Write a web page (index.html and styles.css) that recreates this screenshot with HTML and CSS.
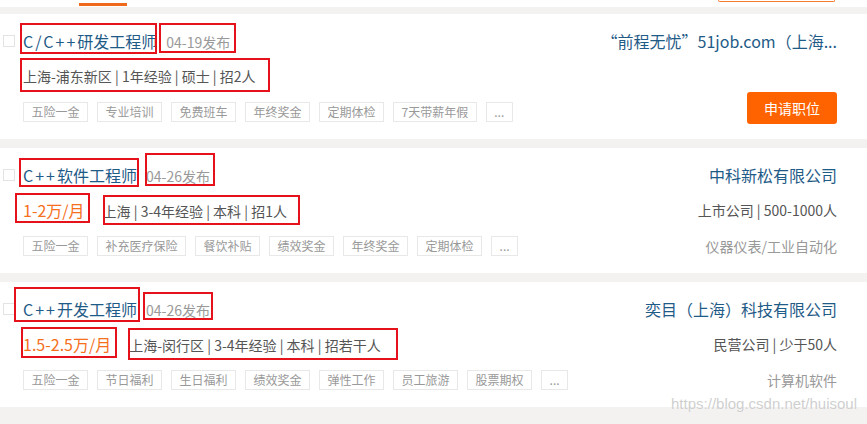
FILE: index.html
```html
<!DOCTYPE html>
<html lang="zh-CN">
<head>
<meta charset="utf-8">
<title>职位列表</title>
<link rel="stylesheet" href="styles.css">
</head>
<body>
<div class="topbar">
  <span class="tab-line"></span>
  <span class="top-btn"></span>
</div>

<div class="list">
  <div class="card">
    <span class="cb"></span>
    <div class="main">
      <div class="row1"><span class="title"><span class="lat">C/C++</span>研发工程师</span><span class="date">04-19发布</span></div>
      <div class="row2"><span class="info">上海-浦东新区 | 1年经验 | 硕士 | 招2人</span></div>
      <div class="tags">
        <span class="tag">五险一金</span><span class="tag">专业培训</span><span class="tag">免费班车</span><span class="tag">年终奖金</span><span class="tag">定期体检</span><span class="tag">7天带薪年假</span><span class="tag">...</span>
      </div>
    </div>
    <div class="side">
      <div class="company">“前程无忧”51job.com（上海...</div>
      <button class="apply">申请职位</button>
    </div>
    <i class="mark m1-title"></i><i class="mark m1-date"></i><i class="mark m1-info"></i>
  </div>

  <div class="card">
    <span class="cb"></span>
    <div class="main">
      <div class="row1"><span class="title"><span class="lat">C++</span>软件工程师</span><span class="date">04-26发布</span></div>
      <div class="row2"><span class="salary">1-2万/月</span><span class="info">上海 | 3-4年经验 | 本科 | 招1人</span></div>
      <div class="tags">
        <span class="tag">五险一金</span><span class="tag">补充医疗保险</span><span class="tag">餐饮补贴</span><span class="tag">绩效奖金</span><span class="tag">年终奖金</span><span class="tag">定期体检</span><span class="tag">...</span>
      </div>
    </div>
    <div class="side">
      <div class="company">中科新松有限公司</div>
      <div class="size">上市公司 | 500-1000人</div>
      <div class="industry">仪器仪表/工业自动化</div>
    </div>
    <i class="mark m2-title"></i><i class="mark m2-date"></i><i class="mark m2-salary"></i><i class="mark m2-info"></i>
  </div>

  <div class="card">
    <span class="cb"></span>
    <div class="main">
      <div class="row1"><span class="title"><span class="lat">C++</span>开发工程师</span><span class="date">04-26发布</span></div>
      <div class="row2"><span class="salary">1.5-2.5万/月</span><span class="info">上海-闵行区 | 3-4年经验 | 本科 | 招若干人</span></div>
      <div class="tags">
        <span class="tag">五险一金</span><span class="tag">节日福利</span><span class="tag">生日福利</span><span class="tag">绩效奖金</span><span class="tag">弹性工作</span><span class="tag">员工旅游</span><span class="tag">股票期权</span><span class="tag">...</span>
      </div>
    </div>
    <div class="side">
      <div class="company">奕目（上海）科技有限公司</div>
      <div class="size">民营公司 | 少于50人</div>
      <div class="industry">计算机软件</div>
    </div>
    <i class="mark m3-title"></i><i class="mark m3-date"></i><i class="mark m3-salary"></i><i class="mark m3-info"></i>
  </div>
</div>

<div class="watermark">https://blog.csdn.net/huisoul</div>
</body>
</html>
```

FILE: styles.css
```css
* { box-sizing: border-box; }

html, body {
  margin: 0;
  padding: 0;
}

body {
  width: 867px;
  height: 424px;
  overflow: hidden;
  background: #f3f2f1;
  font-family: "Noto Sans CJK SC", "Microsoft YaHei", sans-serif;
  color: #555;
  position: relative;
}

.topbar {
  height: 7px;
  background: #fff;
  display: flex;
  align-items: flex-start;
}

.tab-line {
  margin: 3px 0 0 79px;
  width: 48px;
  height: 3px;
  background: #f06a1d;
}

.top-btn {
  margin-left: auto;
  margin-right: 32px;
  width: 117px;
  height: 2px;
  border: 1px solid #f47c30;
  border-top: none;
  border-radius: 0 0 3px 3px;
}

.list {
  margin-top: 7px;
  display: flex;
  flex-direction: column;
  gap: 9px;
}

.card {
  position: relative;
  height: 125px;
  background: #fff;
  display: flex;
  padding: 16px 30px 0 0;
}

.cb {
  flex: none;
  width: 12px;
  height: 12px;
  margin: 5px 8px 0 3px;
  border: 1px solid #e3e3e3;
  background: #fff;
}

.main {
  flex: 1;
  min-width: 0;
}

.row1 {
  height: 22px;
  line-height: 22px;
  display: flex;
  align-items: baseline;
  white-space: nowrap;
}

.title {
  font-size: 16px;
  color: #1f5b87;
}

.lat {
  letter-spacing: 2px;
}

.date {
  margin-left: 9px;
  font-size: 14px;
  color: #999;
}

.row2 {
  margin-top: 13px;
  height: 22px;
  line-height: 22px;
  display: flex;
  align-items: baseline;
  white-space: nowrap;
}

.salary {
  font-size: 16px;
  color: #f66f1c;
  margin-right: 18px;
}

.info {
  font-size: 14px;
  color: #555;
}

.tags {
  margin-top: 15px;
  display: flex;
  gap: 9px;
}

.tag {
  height: 20px;
  line-height: 18px;
  padding: 0 7.5px;
  border: 1px solid #e8e8e8;
  font-size: 12px;
  color: #999;
  white-space: nowrap;
}

.side {
  flex: none;
  display: flex;
  flex-direction: column;
  align-items: flex-end;
  white-space: nowrap;
}

.company {
  font-size: 16px;
  line-height: 22px;
  color: #1f5b87;
}

.size {
  margin-top: 13px;
  font-size: 14px;
  line-height: 22px;
  color: #555;
}

.industry {
  margin-top: 15px;
  font-size: 14px;
  line-height: 20px;
  color: #999;
}

.apply {
  margin-top: 40px;
  width: 90px;
  height: 32px;
  border: none;
  border-radius: 3px;
  background: #ff6300;
  color: #fff;
  font-family: inherit;
  font-size: 14px;
  padding: 0;
}

/* red annotation rectangles drawn over the screenshot */
.mark {
  position: absolute;
  border: 2px solid #e5121b;
  pointer-events: none;
}

.m1-title { left: 20px; top: 9px; width: 137px; height: 31px; }
.m1-date  { left: 159px; top: 9px; width: 77px; height: 30px; }
.m1-info  { left: 20px; top: 44px; width: 250px; height: 34px; }

.m2-title  { left: 19px; top: 10px; width: 120px; height: 29px; }
.m2-date   { left: 145px; top: 5px; width: 70px; height: 33px; }
.m2-salary { left: 15px; top: 45px; width: 75px; height: 30px; }
.m2-info   { left: 103px; top: 47px; width: 197px; height: 30px; }

.m3-title  { left: 14px; top: 5px; width: 126px; height: 35px; }
.m3-date   { left: 143px; top: 10px; width: 70px; height: 28px; }
.m3-salary { left: 21px; top: 45px; width: 96px; height: 31px; }
.m3-info   { left: 128px; top: 46px; width: 270px; height: 32px; }

.watermark {
  position: absolute;
  right: 10px;
  top: 395px;
  font-family: "Liberation Sans", Arial, sans-serif;
  font-size: 15px;
  line-height: 18px;
  color: rgba(190, 190, 190, 0.75);
  text-shadow: 0 0 1px #fff;
}
```
